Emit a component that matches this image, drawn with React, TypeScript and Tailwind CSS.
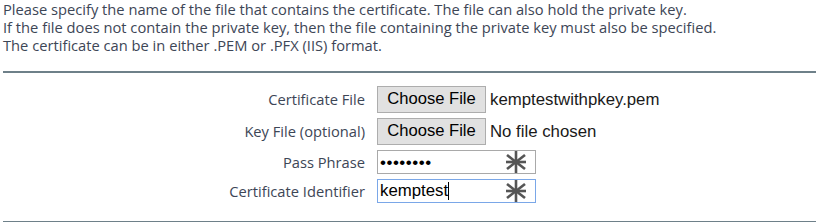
import React from "react";

function Asterisk() {
    return (
        <svg width="22" height="22" viewBox="0 0 22 22" className="absolute right-[8px] top-1/2 -translate-y-1/2">
            <g stroke="#555555" strokeWidth="2.6" strokeLinecap="butt">
                <line x1="11" y1="0" x2="11" y2="22" />
                <line x1="2" y1="4" x2="20" y2="18" />
                <line x1="20" y1="4" x2="2" y2="18" />
                <line x1="1" y1="11" x2="21" y2="11" />
            </g>
        </svg>
    );
}

const labelCls = "text-right pr-[12px] text-[14.7px] text-[#3d4656] whitespace-nowrap";
const arial = { fontFamily: "'Liberation Sans', Arial, sans-serif" };

export default function App() {
    return (
        <div className="w-[820px] h-[222px] bg-white px-[3px] overflow-hidden" style={{ fontFamily: "'Open Sans', 'Noto Sans', sans-serif" }}>
            {/* intro */}
            <div className="text-[14.7px] leading-[18px] text-[#3d4656]">
                <p>Please specify the name of the file that contains the certificate. The file can also hold the private key.</p>
                <p>If the file does not contain the private key, then the file containing the private key must also be specified.</p>
                <p>The certificate can be in either .PEM or .PFX (IIS) format.</p>
            </div>

            <div className="mt-[17px] border-t-2 border-[#6e8089] mr-[1px]" />

            {/* form */}
            <div className="grid grid-cols-[374px_1fr] items-center gap-y-[5px] pt-[13px]">
                <div className={labelCls}>Certificate File</div>
                <div className="flex items-center gap-[4px]" style={arial}>
                    <button className="h-[27px] w-[109px] border border-[#adadad] bg-[#e1e1e1] text-[16.6px] text-black">Choose File</button>
                    <span className="text-[16.8px] text-[#1a1a1a]">kemptestwithpkey.pem</span>
                </div>

                <div className={labelCls}>Key File (optional)</div>
                <div className="flex items-center gap-[4px]" style={arial}>
                    <button className="h-[27px] w-[109px] border border-[#adadad] bg-[#e1e1e1] text-[16.6px] text-black">Choose File</button>
                    <span className="text-[16.8px] text-[#1a1a1a]">No file chosen</span>
                </div>

                <div className={labelCls}>Pass Phrase</div>
                <div className="relative w-[159px] h-[24px] border border-[#a9a9a9] bg-white flex items-center pl-[2px]" style={arial}>
                    <span className="text-[17px] tracking-[0.5px] text-black leading-none">••••••••</span>
                    <Asterisk />
                </div>

                <div className={labelCls}>Certificate Identifier</div>
                <div className="relative w-[159px] h-[24px] border border-[#7aa7e8] bg-white flex items-center pl-[2px]" style={arial}>
                    <span className="text-[16.8px] text-black">kemptest</span>
                    <span className="w-px h-[18px] bg-black" />
                    <Asterisk />
                </div>
            </div>

            <div className="mt-[18px] border-t-2 border-[#6e8089] mr-[1px]" />
        </div>
    );
}
